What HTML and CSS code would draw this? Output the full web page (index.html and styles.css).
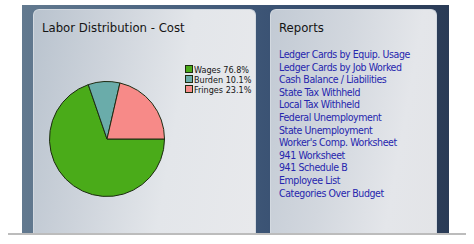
FILE: index.html
```html
<!DOCTYPE html>
<html>
<head>
<meta charset="utf-8">
<link rel="stylesheet" href="styles.css">
</head>
<body>
<div class="frame">
  <section class="panel panel-chart">
    <h2 class="panel-title">Labor Distribution - Cost</h2>
    <svg class="chart" width="223" height="198" viewBox="0 0 223 198">
      <path d="M73,105 L54.28,50.63 A57.5,57.5 0 1,0 130.5,105 Z" fill="#4aab19" stroke="#1d2b12" stroke-width="1"/>
      <path d="M73,105 L85.94,48.98 A57.5,57.5 0 0,0 54.28,50.63 Z" fill="#6aacaa" stroke="#1d2b12" stroke-width="1"/>
      <path d="M73,105 L130.5,105 A57.5,57.5 0 0,0 85.94,48.98 Z" fill="#f78a88" stroke="#1d2b12" stroke-width="1"/>
      <rect x="151.5" y="31.5" width="7" height="7" fill="#4aab19" stroke="#1d2b12"/>
      <rect x="151.5" y="41.5" width="7" height="7" fill="#6aacaa" stroke="#1d2b12"/>
      <rect x="151.5" y="51.5" width="7" height="7" fill="#f78a88" stroke="#1d2b12"/>
      <text class="legend" x="160" y="38.5">Wages 76.8%</text>
      <text class="legend" x="160" y="48.5">Burden 10.1%</text>
      <text class="legend" x="160" y="58.5">Fringes 23.1%</text>
    </svg>
  </section>
  <section class="panel panel-reports">
    <h2 class="panel-title">Reports</h2>
    <ul class="links">
      <li><a href="#">Ledger Cards by Equip. Usage</a></li>
      <li><a href="#">Ledger Cards by Job Worked</a></li>
      <li><a href="#">Cash Balance / Liabilities</a></li>
      <li><a href="#">State Tax Withheld</a></li>
      <li><a href="#">Local Tax Withheld</a></li>
      <li><a href="#">Federal Unemployment</a></li>
      <li><a href="#">State Unemployment</a></li>
      <li><a href="#">Worker's Comp. Worksheet</a></li>
      <li><a href="#">941 Worksheet</a></li>
      <li><a href="#">941 Schedule B</a></li>
      <li><a href="#">Employee List</a></li>
      <li><a href="#">Categories Over Budget</a></li>
    </ul>
  </section>
</div>
<div class="rule"></div>
</body>
</html>
```
FILE: styles.css
```css
html, body {
  margin: 0;
  padding: 0;
  background: #ffffff;
}
body {
  font-family: "DejaVu Sans Condensed", "DejaVu Sans", sans-serif;
}
.frame {
  margin: 5px 0 0 22px;
  width: 427px;
  height: 228px;
  box-sizing: border-box;
  padding: 4px 12px 0 11px;
  display: flex;
  gap: 14px;
  background: linear-gradient(90deg, #62798f 0%, #4d6682 30%, #3b5374 58%, #2a3b56 100%);
}
.panel {
  box-sizing: border-box;
  border: 1px solid #d3d9e0;
  border-bottom: none;
  border-radius: 6px 6px 0 0;
  background: linear-gradient(100deg, #b9c3ce 0%, #cdd3db 30%, #e3e6ea 62%, #e8e9ec 100%);
}
.panel-chart {
  width: 223px;
}
.panel-reports {
  width: 167px;
  background: linear-gradient(100deg, #c2cad4 0%, #d2d7de 40%, #e4e6ea 75%, #e3e4e7 100%);
}
.panel-title {
  margin: 0;
  padding: 10px 0 0 8px;
  height: 24px;
  box-sizing: border-box;
  font-size: 13px;
  line-height: 16px;
  font-weight: normal;
  color: #141414;
}
.chart {
  display: block;
}
.legend {
  font-family: "DejaVu Sans Condensed", "DejaVu Sans", sans-serif;
  font-size: 9px;
  fill: #141414;
}
.links {
  list-style: none;
  margin: 14px 0 0 0;
  padding: 0 0 0 8px;
}
.links li {
  font-size: 10.5px;
  letter-spacing: -0.4px;
  line-height: 12.6px;
  height: 12.6px;
  white-space: nowrap;
}
.links a {
  color: #2626ae;
  text-decoration: none;
}
.rule {
  margin-left: 8px;
  width: 458px;
  height: 2px;
  background: #bcbcbc;
}
```
